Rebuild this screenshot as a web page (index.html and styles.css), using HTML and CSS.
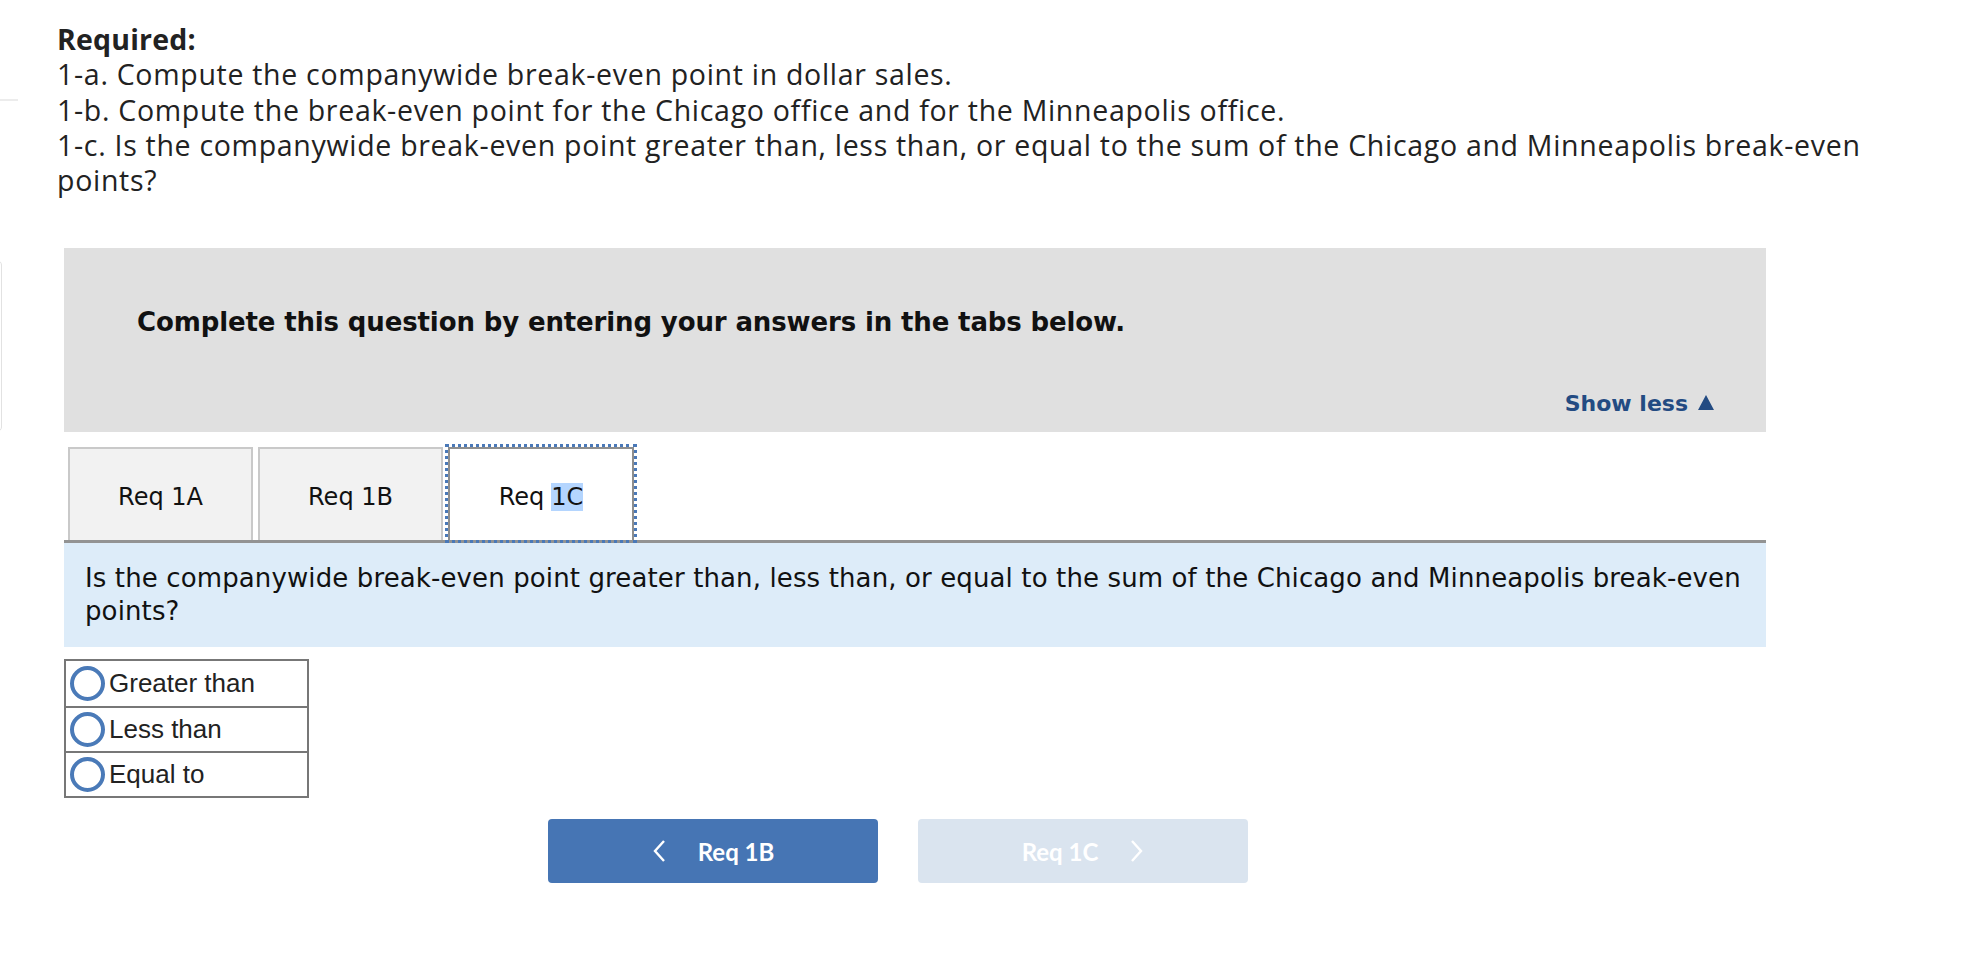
FILE: index.html
```html
<!DOCTYPE html>
<html>
<head>
<meta charset="utf-8">
<link rel="stylesheet" href="styles.css">
</head>
<body>
<div class="decor-line"></div>
<div class="decor-edge"></div>
<div class="page">
  <section class="required">
    <div class="req-title">Required:</div>
    <div>1-a. Compute the companywide break-even point in dollar sales.</div>
    <div>1-b. Compute the break-even point for the Chicago office and for the Minneapolis office.</div>
    <div>1-c. Is the companywide break-even point greater than, less than, or equal to the sum of the Chicago and Minneapolis break-even points?</div>
  </section>

  <section class="panel">
    <div class="instructions">
      <div class="instr-text">Complete this question by entering your answers in the tabs below.</div>
      <div class="show-row">
        <span class="show-less">Show less</span>
        <svg class="tri" width="16" height="15" viewBox="0 0 16 15"><polygon points="8,0 16,15 0,15" fill="#234b82"/></svg>
      </div>
    </div>

    <div class="tabs">
      <div class="tab">Req 1A</div>
      <div class="tab">Req 1B</div>
      <div class="tab active">Req <span class="sel">1C</span></div>
    </div>

    <div class="question">Is the companywide break-even point greater than, less than, or equal to the sum of the Chicago and Minneapolis break-even points?</div>

    <div class="options">
      <div class="opt"><span class="radio"></span><span class="opt-label">Greater than</span></div>
      <div class="opt"><span class="radio"></span><span class="opt-label">Less than</span></div>
      <div class="opt"><span class="radio"></span><span class="opt-label">Equal to</span></div>
    </div>

    <div class="nav">
      <div class="btn prev">
        <svg width="14" height="22" viewBox="0 0 14 22"><polyline points="12,1 3,11 12,21" fill="none" stroke="#fff" stroke-width="2.4"/></svg>
        <span>Req 1B</span>
      </div>
      <div class="btn next">
        <span>Req 1C</span>
        <svg width="14" height="22" viewBox="0 0 14 22"><polyline points="2,1 11,11 2,21" fill="none" stroke="#fff" stroke-width="2.4"/></svg>
      </div>
    </div>
  </section>
</div>
</body>
</html>
```

FILE: styles.css
```css
html, body {
  margin: 0;
  padding: 0;
  background: #fff;
}
body {
  width: 1972px;
  height: 968px;
  overflow: hidden;
  position: relative;
  color: #222;
}
.decor-line {
  position: absolute;
  left: 0;
  top: 99px;
  width: 18px;
  height: 2px;
  background: #ececec;
}
.decor-edge {
  position: absolute;
  left: -8px;
  top: 260px;
  width: 8px;
  height: 170px;
  border: 1px solid #e2e2e2;
  border-radius: 6px;
}
.page {
  padding-top: 22px;
}
.required {
  padding-left: 57px;
  width: 1860px;
  font-family: "Open Sans", Lato, sans-serif;
  font-size: 28.5px;
  letter-spacing: 0.7px;
  line-height: 35.3px;
  color: #222;
}
.req-title {
  font-weight: bold;
  letter-spacing: 0.2px;
}
.panel {
  margin-left: 64px;
  margin-top: 50px;
  width: 1702px;
  font-family: "DejaVu Sans", Verdana, sans-serif;
}
.instructions {
  background: #e0e0e0;
  height: 184px;
  box-sizing: border-box;
  padding: 59px 52px 0 73px;
}
.instr-text {
  font-weight: bold;
  font-size: 26px;
  letter-spacing: -0.13px;
  line-height: 30px;
  color: #111;
}
.show-row {
  margin-top: 54px;
  display: flex;
  justify-content: flex-end;
  align-items: center;
  gap: 10px;
}
.show-less {
  font-weight: bold;
  font-size: 22px;
  line-height: 26px;
  color: #234b82;
}
.tri {
  margin-top: -3px;
}
.tabs {
  margin-top: 15px;
  display: flex;
  gap: 5px;
  padding-left: 4px;
  border-bottom: 3px solid #939393;
}
.tab {
  width: 185px;
  height: 93px;
  box-sizing: border-box;
  border: 2px solid #c9c9c9;
  border-bottom: none;
  background: #f2f2f2;
  display: flex;
  align-items: center;
  justify-content: center;
  font-size: 24px;
  color: #111;
  padding-top: 4px;
}
.tab.active {
  background: #fff;
  border-color: #8e8e8e;
  outline: 3px dotted #4a79b8;
  outline-offset: 0;
  width: 186px;
}
.sel {
  background: #b4d5fe;
  margin-left: 7px;
}
.question {
  background: #ddecf9;
  padding: 19px 8px 19px 21px;
  font-size: 26px;
  letter-spacing: 0.12px;
  line-height: 33px;
  color: #111;
}
.options {
  margin-top: 12px;
  width: 245px;
  border: 2px solid #777;
  box-sizing: border-box;
}
.opt {
  height: 45px;
  box-sizing: border-box;
  display: flex;
  align-items: center;
  padding-left: 4px;
  gap: 4px;
  font-family: "Liberation Sans", Arial, sans-serif;
  font-size: 26px;
  color: #222;
}
.opt + .opt {
  border-top: 2px solid #777;
}
.radio {
  width: 35px;
  height: 35px;
  box-sizing: border-box;
  border: 4px solid #4a7ab8;
  border-radius: 50%;
  flex: none;
}
.nav {
  margin-top: 21px;
  margin-left: 484px;
  display: flex;
  gap: 40px;
}
.btn {
  width: 330px;
  height: 64px;
  border-radius: 4px;
  display: flex;
  align-items: center;
  justify-content: center;
  gap: 32px;
  font-family: Lato, "Open Sans", sans-serif;
  font-weight: bold;
  font-size: 24px;
  color: #fff;
}
.btn.prev {
  background: #4675b4;
}
.btn.next {
  background: #dae4ef;
}
.btn svg {
  display: block;
}
```
